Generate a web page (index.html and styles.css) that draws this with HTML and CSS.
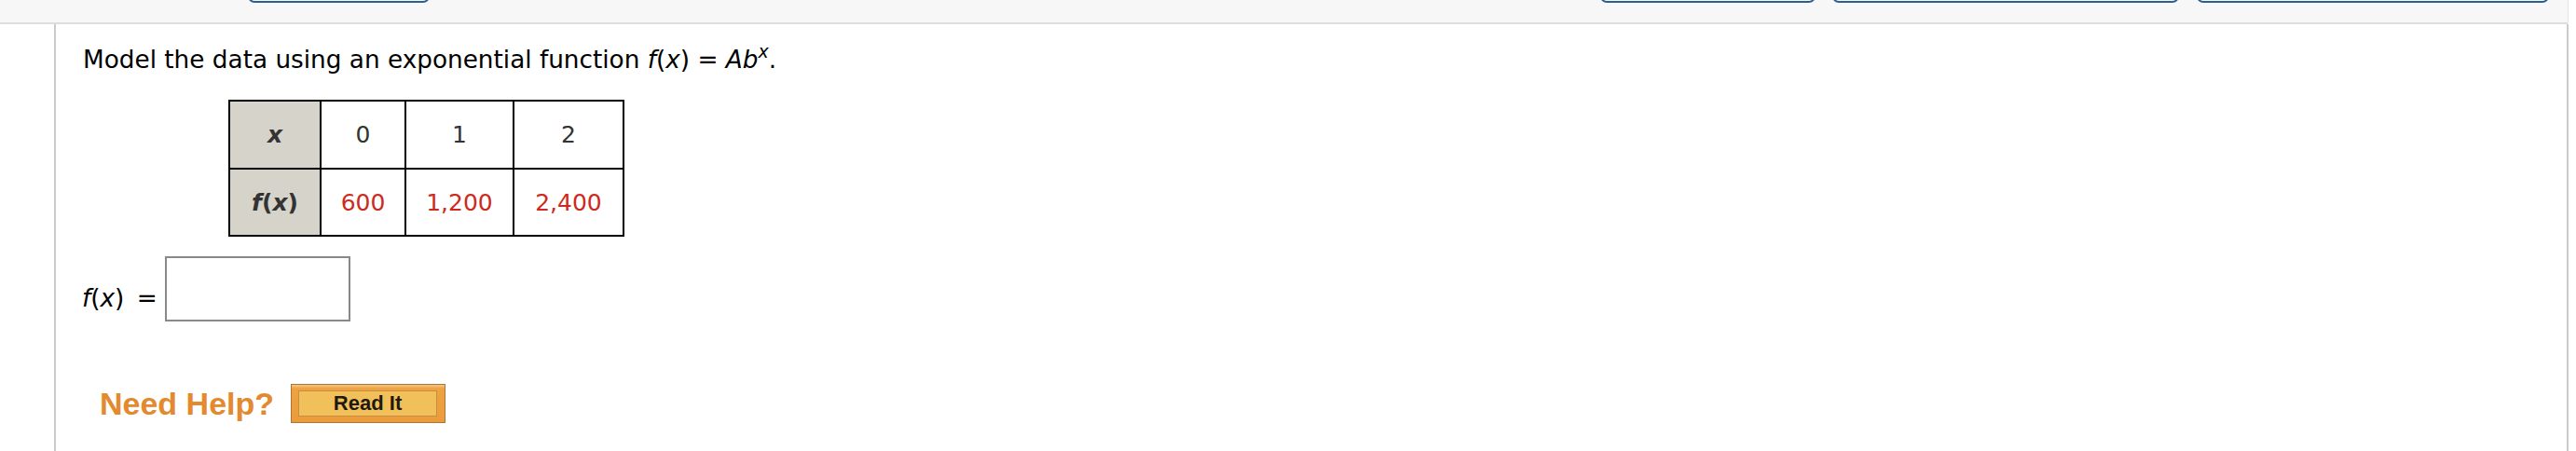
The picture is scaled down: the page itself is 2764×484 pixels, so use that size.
FILE: index.html
```html
<!DOCTYPE html>
<html>
<head>
<meta charset="utf-8">
<link rel="stylesheet" href="styles.css">
</head>
<body>
<div class="topbar">
  <span class="tab tab-a"></span>
  <span class="spacer"></span>
  <span class="tab tab-b"></span>
  <span class="tab tab-c"></span>
  <span class="tab tab-d"></span>
</div>
<div class="panel">
  <p class="question">Model the data using an exponential function <i>f</i>(<i>x</i>) = <i>Ab</i><sup class="exp"><i>x</i></sup>.</p>
  <table class="data">
    <tr>
      <th class="c1"><i>x</i></th>
      <td class="c2">0</td>
      <td class="c3">1</td>
      <td class="c4">2</td>
    </tr>
    <tr>
      <th class="c1"><i>f</i>(<i>x</i>)</th>
      <td class="val">600</td>
      <td class="val">1,200</td>
      <td class="val">2,400</td>
    </tr>
  </table>
  <div class="answer">
    <span class="label"><i>f</i>(<i>x</i>) <span class="eq">=</span></span>
    <span class="input"></span>
  </div>
  <div class="help">
    <span class="need">Need Help?</span>
    <span class="readit"><span class="readit-inner">Read It</span></span>
  </div>
</div>
</body>
</html>
```
FILE: styles.css
```css
html, body {
  margin: 0;
  padding: 0;
  background: #ffffff;
}
body {
  width: 2764px;
  height: 484px;
  overflow: hidden;
  font-family: "DejaVu Sans", Verdana, sans-serif;
}
.topbar {
  width: 2755px;
  height: 24px;
  background: #f7f7f7;
  border-bottom: 2px solid #dddddd;
  border-right: 1px solid #e4e4e4;
  border-bottom-right-radius: 2px;
  display: flex;
  align-items: flex-start;
}
.tab {
  display: block;
  height: 25px;
  margin-top: -22px;
  border: 2px solid #2c5f91;
  border-radius: 7px;
  box-sizing: border-box;
  flex: none;
}
.tab-a { width: 195px; margin-left: 266px; }
.spacer { flex: 1; }
.tab-b { width: 231px; }
.tab-c { width: 372px; margin-left: 18px; }
.tab-d { width: 378px; margin-left: 19px; margin-right: 20px; }
.panel {
  margin-left: 58px;
  width: 2698px;
  height: 458px;
  box-sizing: border-box;
  border-left: 2px solid #cbcbcb;
  border-right: 2px solid #cbcbcb;
  padding-left: 29px;
  padding-top: 22px;
  color: #000;
}
.question {
  margin: 0;
  font-size: 26.3px;
  line-height: 32px;
}
.exp {
  font-size: 19px;
  line-height: 0;
  vertical-align: 11px;
}
.data {
  border-collapse: collapse;
  margin-top: 27px;
  margin-left: 156px;
  font-size: 25px;
  color: #333333;
}
.data th, .data td {
  border: 2px solid #000;
  text-align: center;
  padding: 0;
  box-sizing: border-box;
}
.data th {
  background: #d6d3cb;
  font-weight: bold;
}
.c1 { width: 98px; }
.c2 { width: 91px; }
.c3 { width: 116px; }
.c4 { width: 118px; }
.data tr:first-child th, .data tr:first-child td { height: 73px; }
.data tr:last-child th, .data tr:last-child td { height: 72px; }
.val { color: #cd2a1e; }
.answer {
  display: flex;
  align-items: flex-start;
  margin-top: 21px;
  margin-left: -1px;
}
.label {
  font-size: 26.3px;
  line-height: 32px;
  margin-top: 29px;
}
.eq {
  margin-left: 5px;
}
.input {
  display: block;
  width: 199px;
  height: 70px;
  box-sizing: border-box;
  border: 2px solid #898989;
  background: #fff;
  margin-left: 8px;
}
.help {
  display: flex;
  align-items: center;
  margin-top: 67px;
  margin-left: 18px;
}
.need {
  font-family: "Liberation Sans", Arial, sans-serif;
  font-weight: bold;
  font-size: 34px;
  color: #e38a2e;
  line-height: 42px;
}
.readit {
  display: flex;
  box-sizing: border-box;
  width: 166px;
  height: 42px;
  margin-left: 18px;
  border: 1px solid #a5773a;
  background: linear-gradient(#f6c889 0, #eea242 4px, #ec9b3a 100%);
  padding: 6px 8px 6px 7px;
}
.readit-inner {
  flex: 1;
  border: 1px solid #c58f3f;
  background: #f2c05a;
  font-family: "Liberation Sans", Arial, sans-serif;
  font-weight: bold;
  font-size: 22px;
  color: #1f1a10;
  text-align: center;
  line-height: 26px;
}
```
